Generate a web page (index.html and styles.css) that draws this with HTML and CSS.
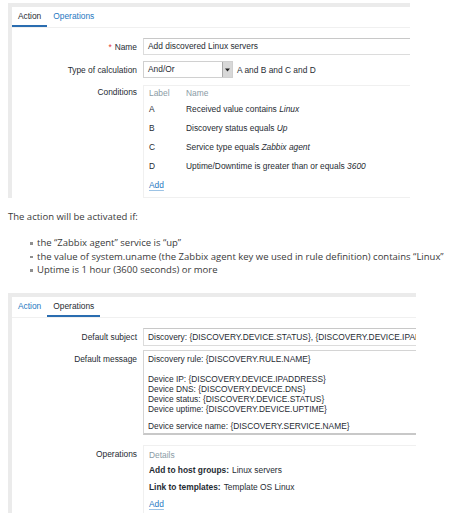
FILE: index.html
```html
<!DOCTYPE html>
<html>
<head>
<meta charset="utf-8">
<link rel="stylesheet" href="styles.css">
</head>
<body>
<div class="panel panel-one">
  <div class="tabs">
    <span class="tab active">Action</span>
    <span class="tab link">Operations</span>
  </div>
  <div class="form">
    <div class="row r-name">
      <div class="label"><span class="req">*</span> Name</div>
      <div class="field"><div class="input">Add discovered Linux servers</div></div>
    </div>
    <div class="row r-calc">
      <div class="label">Type of calculation</div>
      <div class="field calc">
        <div class="select"><span>And/Or</span><span class="arrow"><svg width="5" height="4" viewBox="0 0 5 4"><path d="M0 0.5h5L2.5 3.5z" fill="#222"/></svg></span></div>
        <span class="expr">A and B and C and D</span>
      </div>
    </div>
    <div class="row r-cond">
      <div class="label top">Conditions</div>
      <div class="field">
        <div class="box cond">
          <div class="crow head"><span class="c1">Label</span><span>Name</span></div>
          <div class="crow"><span class="c1">A</span><span>Received value contains <i>Linux</i></span></div>
          <div class="crow"><span class="c1">B</span><span>Discovery status equals <i>Up</i></span></div>
          <div class="crow"><span class="c1">C</span><span>Service type equals <i>Zabbix agent</i></span></div>
          <div class="crow"><span class="c1">D</span><span>Uptime/Downtime is greater than or equals <i>3600</i></span></div>
          <div class="crow"><a class="add">Add</a></div>
        </div>
      </div>
    </div>
  </div>
</div>

<p class="intro">The action will be activated if:</p>
<ul class="list">
  <li>the “Zabbix agent” service is “up”</li>
  <li>the value of system.uname (the Zabbix agent key we used in rule definition) contains “Linux”</li>
  <li>Uptime is 1 hour (3600 seconds) or more</li>
</ul>

<div class="panel panel-two">
  <div class="tabs">
    <span class="tab link">Action</span>
    <span class="tab active">Operations</span>
  </div>
  <div class="form">
    <div class="row r-subj">
      <div class="label">Default subject</div>
      <div class="field"><div class="input tall">Discovery: {DISCOVERY.DEVICE.STATUS}, {DISCOVERY.DEVICE.IPADDRESS}</div></div>
    </div>
    <div class="row r-msg">
      <div class="label top msg-label">Default message</div>
      <div class="field">
        <div class="textarea">
          <div>Discovery rule: {DISCOVERY.RULE.NAME}</div>
          <div>&nbsp;</div>
          <div>Device IP: {DISCOVERY.DEVICE.IPADDRESS}</div>
          <div>Device DNS: {DISCOVERY.DEVICE.DNS}</div>
          <div>Device status: {DISCOVERY.DEVICE.STATUS}</div>
          <div>Device uptime: {DISCOVERY.DEVICE.UPTIME}</div>
          <div class="gap"></div>
          <div>Device service name: {DISCOVERY.SERVICE.NAME}</div>
        </div>
      </div>
    </div>
    <div class="row r-ops">
      <div class="label top ops-label">Operations</div>
      <div class="field">
        <div class="box ops">
          <div class="orow head">Details</div>
          <div class="orow"><b>Add to host groups:</b> Linux servers</div>
          <div class="orow"><b>Link to templates:</b> Template OS Linux</div>
          <div class="orow"><a class="add">Add</a></div>
        </div>
      </div>
    </div>
  </div>
</div>
</body>
</html>
```

FILE: styles.css
```css
html, body {
  margin: 0;
  padding: 0;
  background: #ffffff;
}
body {
  padding-top: 3px;
  font-family: "Liberation Sans", Arial, sans-serif;
  font-size: 8.4px;
  color: #1f2c33;
}
.panel {
  margin-left: 8px;
  border-top: 4px solid #ebebeb;
  border-left: 4px solid #ebebeb;
  background: #fff;
  overflow: hidden;
  box-sizing: border-box;
}
.panel-one {
  width: 402px;
  height: 195px;
}
.panel-two {
  width: 408px;
  height: 220px;
}
.tabs {
  display: flex;
  height: 21px;
  border-bottom: 1px solid #f0f0f0;
  box-sizing: border-box;
}
.tab {
  padding: 0 6px;
  line-height: 19px;
  height: 20px;
  box-sizing: border-box;
  border-bottom: 2px solid transparent;
  color: #1f2c33;
}
.tab.active {
  border-bottom-color: #2a6db0;
}
.tab.link {
  color: #1f78c1;
}
.row {
  display: flex;
  gap: 6px;
}
.label {
  width: 125px;
  flex: none;
  text-align: right;
  display: flex;
  align-items: center;
  justify-content: flex-end;
}
.label.top {
  align-items: flex-start;
}
.req {
  color: #e33734;
  margin-right: 3px;
}
.field {
  flex: 1;
  min-width: 0;
  display: flex;
}
.input {
  flex: none;
  width: 320px;
  height: 17px;
  line-height: 15px;
  box-sizing: border-box;
  border: 1px solid #dcdcdc;
  border-top-color: #c8c8c8;
  padding: 0 4px;
  white-space: nowrap;
  background: #fff;
}
.input.tall {
  height: 18px;
  line-height: 16px;
  width: 330px;
}
.r-name {
  margin-top: 10px;
}
.r-calc {
  margin-top: 6px;
}
.calc {
  align-items: center;
  gap: 4px;
}
.select {
  width: 90px;
  height: 17px;
  box-sizing: border-box;
  border: 1px solid #d0d0d0;
  display: flex;
  justify-content: space-between;
  align-items: stretch;
  background: #fff;
}
.select span:first-child {
  padding-left: 4px;
  line-height: 15px;
}
.arrow {
  width: 9px;
  background: #d8d8d8;
  border-left: 1px solid #aaa;
  display: flex;
  align-items: center;
  justify-content: center;
}
.expr {
  white-space: nowrap;
}
.r-cond {
  margin-top: 7px;
}
.r-cond .label {
  padding-top: 2px;
}
.box {
  flex: none;
  width: 320px;
  border: 1px solid #f0f0f0;
  box-sizing: border-box;
  padding-left: 5px;
}
.cond {
  padding-top: 0;
  padding-bottom: 3px;
}
.crow {
  display: flex;
  height: 19px;
  align-items: center;
  white-space: nowrap;
}
.crow.head {
  height: 13px;
  color: #8a9ba5;
}
.c1 {
  width: 37px;
  flex: none;
}
.add {
  color: #1f78c1;
  text-decoration: underline;
  text-decoration-color: #9cc3e5;
  text-underline-offset: 2px;
}
.intro {
  margin: 12px 0 0 8px;
  font-family: "Open Sans", "DejaVu Sans", sans-serif;
  font-size: 9.5px;
  line-height: 13.5px;
  color: #3a3a3a;
}
.list {
  margin: 12.5px 0 16px 0;
  padding: 0 0 0 37px;
  list-style: none;
  font-family: "Open Sans", "DejaVu Sans", sans-serif;
  font-size: 9.5px;
  line-height: 13.5px;
  color: #3a3a3a;
}
.list li {
  position: relative;
  white-space: nowrap;
}
.list li::before {
  content: "";
  position: absolute;
  left: -7px;
  top: 6px;
  width: 2.5px;
  height: 2.5px;
  background: #8f8f8f;
}
.r-subj {
  margin-top: 10px;
}
.r-subj .label {
  align-items: center;
}
.r-msg {
  margin-top: 4px;
}
.msg-label {
  padding-top: 4px;
}
.textarea {
  flex: none;
  width: 330px;
  height: 85px;
  box-sizing: border-box;
  border: 1px solid #d4d4d4;
  border-bottom: 2px solid #c8c8c8;
  padding: 3px 4px;
  line-height: 10px;
  white-space: nowrap;
}
.textarea .gap {
  height: 7px;
}
.r-ops {
  margin-top: 10px;
}
.ops-label {
  padding-top: 4px;
}
.ops {
  width: 330px;
  height: 80px;
  padding-top: 2px;
}
.orow {
  height: 17px;
  display: flex;
  align-items: center;
  white-space: nowrap;
}
.orow.head {
  height: 14px;
  color: #8a9ba5;
}
.orow b {
  margin-right: 3px;
}
```
